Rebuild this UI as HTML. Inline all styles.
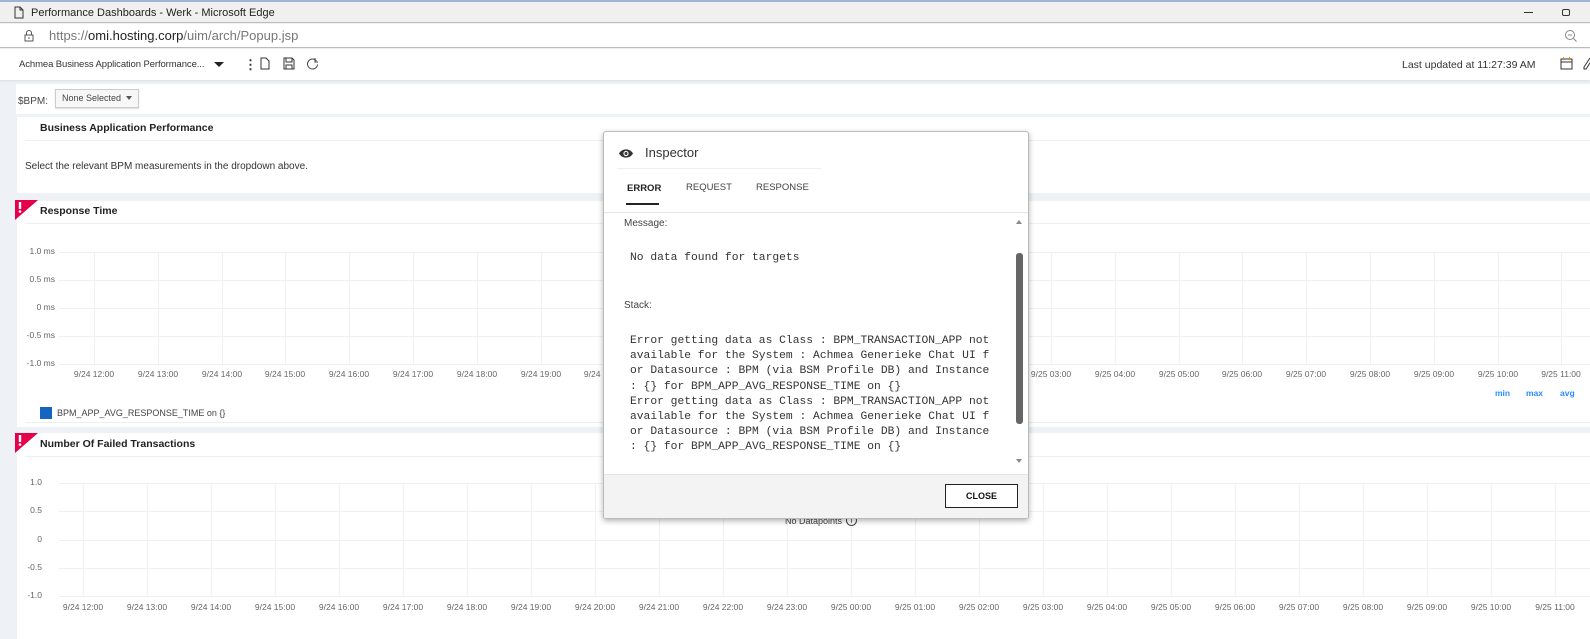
<!DOCTYPE html>
<html><head><meta charset="utf-8"><style>
*{margin:0;padding:0;box-sizing:border-box}
body{width:1590px;height:639px;overflow:hidden;background:#eef1f5;font-family:"Liberation Sans",sans-serif;color:#333;position:relative;font-size:10px}
.a{position:absolute;white-space:nowrap}
.mono{font-family:"Liberation Mono",monospace;font-size:11.3px;color:#333}
.lbl{font-size:8.5px;color:#666}
.vl{position:absolute;width:1px;background:#f0f0f0}
.hl{position:absolute;height:1px;background:#f0f0f0}
</style></head><body>
<div class="a" style="left:0;top:0;width:1590px;height:2px;background:#9db4d4"></div>
<div class="a" style="left:0;top:2px;width:1590px;height:21px;background:#f0f0f0;border-bottom:1px solid #bbb"></div>
<svg class="a" style="left:14px;top:6px" width="10" height="13"><path d="M1 1h5l3 3v8H1z M6 1v3h3" fill="none" stroke="#333" stroke-width="1"/></svg>
<div class="a" style="left:31px;top:7px;font-size:11px;color:#222">Performance Dashboards - Werk - Microsoft Edge</div>
<div class="a" style="left:1524px;top:12px;width:9px;height:1px;background:#333"></div>
<div class="a" style="left:1562px;top:9px;width:8px;height:7px;border:1px solid #333;border-radius:2px"></div>
<div class="a" style="left:0;top:24px;width:1590px;height:24px;background:#fff;border-bottom:1px solid #bbb"></div>
<svg class="a" style="left:24px;top:29px" width="10" height="13"><path d="M2.5 6V4a2.5 2.5 0 0 1 5 0v2" fill="none" stroke="#555"/><rect x="1" y="6" width="8" height="6" fill="none" stroke="#555"/><circle cx="5" cy="9" r=".8" fill="#555"/></svg>
<div class="a" style="left:49px;top:28px;font-size:13px;color:#777">https://<span style="color:#222">omi.hosting.corp</span>/uim/arch/Popup.jsp</div>
<svg class="a" style="left:1564px;top:29px" width="14" height="14"><circle cx="6" cy="6" r="4.5" fill="none" stroke="#888"/><path d="M4 6h4M9.5 9.5l3 3" stroke="#888"/></svg>
<div class="a" style="left:0;top:49px;width:1590px;height:31px;background:#fff;box-shadow:0 1px 2px #ddd"></div>
<div class="a" style="left:19px;top:59px;font-size:9.5px;color:#333;letter-spacing:-0.1px">Achmea Business Application Performance...</div>
<div class="a" style="left:214px;top:62px;width:0;height:0;border-left:5px solid transparent;border-right:5px solid transparent;border-top:5px solid #222"></div>
<div class="a" style="left:244px;top:57px;font-size:13px;font-weight:bold;color:#333">&#8942;</div>
<svg class="a" style="left:260px;top:57px" width="10" height="13"><path d="M1 1h5l3 3v8H1z" fill="none" stroke="#333"/></svg>
<svg class="a" style="left:283px;top:57px" width="12" height="13"><path d="M1 1h8l2 2v9H1z M3 1v4h6V1 M3 12V8h6v4" fill="none" stroke="#333"/></svg>
<svg class="a" style="left:306px;top:57px" width="13" height="13"><path d="M10.5 4A5 5 0 1 0 11.5 7.5" fill="none" stroke="#444"/><path d="M9 1v4h3" fill="none" stroke="#444"/></svg>
<div class="a" style="left:1402px;top:59px;font-size:10.5px;color:#333">Last updated at 11:27:39 AM</div>
<svg class="a" style="left:1560px;top:57px" width="13" height="13"><rect x="1" y="2" width="11" height="10" fill="none" stroke="#333"/><path d="M1 5h11" stroke="#333"/><path d="M3.5 0v3M9.5 0v3" stroke="#d80"/></svg>
<svg class="a" style="left:1583px;top:57px" width="8" height="13"><path d="M7 1L1 10v2h2l6-9" fill="none" stroke="#333"/></svg>
<div class="a" style="left:16px;top:84px;width:1574px;height:30px;background:#fff"></div>
<div class="a" style="left:18px;top:96px;font-size:10px;color:#444">$BPM:</div>
<div class="a" style="left:55px;top:89px;width:84px;height:19px;border:1px solid #ccc;background:#f7f7f7;box-shadow:0 1px 1px #ddd"></div>
<div class="a" style="left:62px;top:93px;font-size:9px;color:#444">None Selected</div>
<div class="a" style="left:126px;top:96px;width:0;height:0;border-left:3.5px solid transparent;border-right:3.5px solid transparent;border-top:4px solid #555"></div>
<div class="a" style="left:17px;top:117px;width:1573px;height:76px;background:#fff"></div>
<div class="a" style="left:40px;top:122px;font-size:10.5px;font-weight:bold;color:#222">Business Application Performance</div>
<div class="a" style="left:25px;top:140px;width:1565px;height:1px;background:#f0f0f0"></div>
<div class="a" style="left:25px;top:161px;font-size:10px;color:#333">Select the relevant BPM measurements in the dropdown above.</div>
<div class="a" style="left:17px;top:201px;width:1573px;height:226px;background:#fff"></div>
<svg class="a" style="left:15px;top:200px" width="23" height="20"><path d="M0 0h23L0 20z" fill="#e5004c"/><path d="M5 2v7" stroke="#fff" stroke-width="2.4"/><circle cx="5" cy="11.5" r="1.3" fill="#fff"/></svg>
<div class="a" style="left:40px;top:205px;font-size:10.5px;font-weight:bold;color:#222">Response Time</div>
<div class="a" style="left:25px;top:223px;width:1565px;height:1px;background:#f0f0f0"></div>
<div id="c1"></div>
<div class="a" style="left:40px;top:407px;width:12px;height:12px;background:#1565c0"></div>
<div class="a" style="left:57px;top:408px;font-size:9px;color:#444">BPM_APP_AVG_RESPONSE_TIME on {}</div>
<div class="a" style="left:1495px;top:388px;font-size:8.5px;font-weight:bold;color:#2a8cff">min</div>
<div class="a" style="left:1526px;top:388px;font-size:8.5px;font-weight:bold;color:#2a8cff">max</div>
<div class="a" style="left:1560px;top:388px;font-size:8.5px;font-weight:bold;color:#2a8cff">avg</div>
<div class="a" style="left:25px;top:422px;width:1565px;height:1px;background:#eee"></div>
<div class="a" style="left:17px;top:433px;width:1573px;height:206px;background:#fff"></div>
<svg class="a" style="left:15px;top:433px" width="23" height="20"><path d="M0 0h23L0 20z" fill="#e5004c"/><path d="M5 2v7" stroke="#fff" stroke-width="2.4"/><circle cx="5" cy="11.5" r="1.3" fill="#fff"/></svg>
<div class="a" style="left:40px;top:438px;font-size:10.5px;font-weight:bold;color:#222">Number Of Failed Transactions</div>
<div class="a" style="left:25px;top:456px;width:1565px;height:1px;background:#f0f0f0"></div>
<div id="c2"></div>
<div class="a" style="left:785px;top:516px;font-size:9px;color:#444">No Datapoints</div>
<div class="a" style="left:846px;top:515px;width:11px;height:11px;border:1px solid #444;border-radius:50%;font-size:8px;text-align:center;line-height:9px;color:#444">i</div>
<div class="a" style="left:603px;top:131px;width:426px;height:388px;background:#fff;border:1px solid #bbb;border-radius:3px;box-shadow:0 2px 6px rgba(0,0,0,.3);overflow:hidden">
 <svg class="a" style="left:14px;top:16px" width="16" height="11"><path d="M1 5.5C4 0 12 0 15 5.5C12 11 4 11 1 5.5z" fill="#333"/><circle cx="8" cy="5.5" r="2.6" fill="#fff"/><circle cx="8" cy="5.5" r="1.5" fill="#333"/></svg>
 <div class="a" style="left:41px;top:13px;font-size:13px;color:#333">Inspector</div>
 <div class="a" style="left:13px;top:36px;width:204px;height:1px;background:#eee"></div>
 <div class="a" style="left:23px;top:51px;font-size:9.5px;font-weight:bold;color:#222">ERROR</div>
 <div class="a" style="left:82px;top:50px;font-size:9.5px;color:#444">REQUEST</div>
 <div class="a" style="left:152px;top:50px;font-size:9.5px;color:#444">RESPONSE</div>
 <div class="a" style="left:22px;top:71px;width:33px;height:2px;background:#222"></div>
 <div class="a" style="left:0;top:80px;width:426px;height:1px;background:#e5e5e5"></div>
 <div class="a" style="left:20px;top:86px;font-size:10px;color:#444">Message:</div>
 <div class="a mono" style="left:26px;top:120px">No data found for targets</div>
 <div class="a" style="left:20px;top:168px;font-size:10px;color:#444">Stack:</div>
 <div class="a mono" style="left:26px;top:202px;line-height:15.2px;white-space:pre">Error getting data as Class : BPM_TRANSACTION_APP not
available for the System : Achmea Generieke Chat UI f
or Datasource : BPM (via BSM Profile DB) and Instance
: {} for BPM_APP_AVG_RESPONSE_TIME on {}
Error getting data as Class : BPM_TRANSACTION_APP not
available for the System : Achmea Generieke Chat UI f
or Datasource : BPM (via BSM Profile DB) and Instance
: {} for BPM_APP_AVG_RESPONSE_TIME on {}</div>
 <div class="a" style="left:412px;top:88px;width:0;height:0;border-left:3.5px solid transparent;border-right:3.5px solid transparent;border-bottom:4px solid #888"></div>
 <div class="a" style="left:412px;top:121px;width:7px;height:171px;background:#666;border-radius:3px"></div>
 <div class="a" style="left:412px;top:327px;width:0;height:0;border-left:3.5px solid transparent;border-right:3.5px solid transparent;border-top:4px solid #888"></div>
 <div class="a" style="left:0;top:342px;width:426px;height:46px;background:#f3f3f3;border-top:1px solid #e5e5e5"></div>
 <div class="a" style="left:341px;top:352px;width:73px;height:24px;border:1px solid #222;background:#fff;font-size:9px;font-weight:bold;text-align:center;line-height:22px;color:#111">CLOSE</div>
</div>
<script>
function chart(id,ys,labels,x0,dx,lx0,ldx,xlY,yRight){
 var h='';var top=ys[0],bot=ys[ys.length-1];
 for(var i=0;i<ys.length;i++){h+='<div class="hl" style="left:59px;width:1531px;top:'+ys[i]+'px"></div>';
 h+='<div class="a lbl" style="right:'+(1590-yRight)+'px;top:'+(ys[i]-6)+'px">'+labels[i]+'</div>';}
 for(var j=0;j<24;j++){var x=Math.round(x0+j*dx);h+='<div class="vl" style="left:'+x+'px;top:'+top+'px;height:'+(bot-top)+'px"></div>';
 var d=j<12?'9/24 '+(12+j)+':00':'9/25 '+('0'+(j-12)).slice(-2)+':00';
 h+='<div class="a lbl" style="left:'+Math.round(lx0+j*ldx-21)+'px;top:'+(xlY-6)+'px;width:42px;text-align:center">'+d+'</div>';}
 document.getElementById(id).innerHTML=h;}
chart('c1',[252,280,308,336,364],['1.0 ms','0.5 ms','0 ms','-0.5 ms','-1.0 ms'],94,63.8,94,63.8,375,55);
chart('c2',[483,511,540,568,596],['1.0','0.5','0','-0.5','-1.0'],83,64,83,64,608,42);
</script>
</body></html>
